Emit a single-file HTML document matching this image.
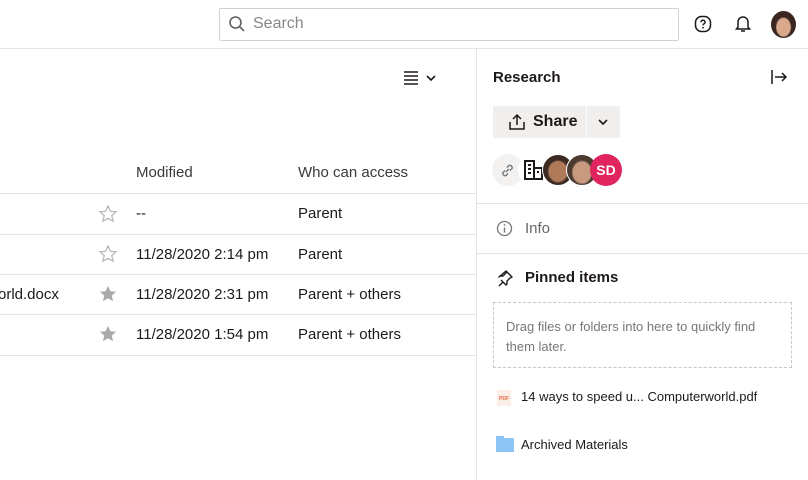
<!DOCTYPE html>
<html><head><style>
*{margin:0;padding:0;box-sizing:border-box}
body{width:808px;height:480px;overflow:hidden;background:#fff;font-family:"Liberation Sans",sans-serif;color:#1e1919;position:relative}
.a{position:absolute}
.hl{position:absolute;height:1px;background:#e6e3e0}
.t{position:absolute;font-size:15px;white-space:nowrap}
</style></head><body>
<div class="a" style="left:219px;top:8px;width:460px;height:33px;border:1px solid #d4d1ce;border-radius:2px"></div>
<svg class="a" style="left:228px;top:15px" width="18" height="18" viewBox="0 0 18 18"><circle cx="7.5" cy="7.5" r="5.5" fill="none" stroke="#636060" stroke-width="1.6"/><path d="M11.5 11.5L16 16" stroke="#636060" stroke-width="1.6"/></svg>
<div class="t" style="left:253px;top:15px;color:#8a8684;font-size:16px">Search</div>
<svg class="a" style="left:694px;top:15px" width="18" height="18" viewBox="0 0 18 18"><rect x="1.5" y="1.5" width="15" height="15" rx="6" fill="none" stroke="#1e1919" stroke-width="1.5"/><path d="M7 7.2a2 2 0 1 1 2.8 1.8c-.6.3-.8.7-.8 1.4" fill="none" stroke="#1e1919" stroke-width="1.4"/><circle cx="9" cy="12.7" r=".9" fill="#1e1919"/></svg>
<svg class="a" style="left:734px;top:14px" width="18" height="20" viewBox="0 0 18 20"><path d="M4 13V8a5 5 0 0 1 10 0v5l1.5 2h-13z" fill="none" stroke="#1e1919" stroke-width="1.5"/><path d="M7 17h4" stroke="#1e1919" stroke-width="1.5"/></svg>
<div class="a" style="left:771px;top:11px;width:25px;height:27px;border-radius:50%;background:radial-gradient(ellipse at 50% 60%,#d9a98e 0 38%,#3a2520 45%)"></div>
<div class="hl" style="left:0;top:48px;width:808px"></div>
<div class="a" style="left:476px;top:48px;width:1px;height:432px;background:#e6e3e0"></div>
<svg class="a" style="left:403px;top:70px" width="36" height="16" viewBox="0 0 36 16"><path d="M1 2h14M1 6h14M1 10h14M1 14h14" stroke="#1e1919" stroke-width="1.6"/><path d="M24 6l4 4 4-4" fill="none" stroke="#1e1919" stroke-width="1.6"/></svg>
<div class="t" style="left:136px;top:164px;color:#3b3838">Modified</div>
<div class="t" style="left:298px;top:164px;color:#3b3838">Who can access</div>
<div class="hl" style="left:0;top:193px;width:476px"></div>
<div class="hl" style="left:0;top:234px;width:476px"></div>
<div class="hl" style="left:0;top:274px;width:476px"></div>
<div class="hl" style="left:0;top:314px;width:476px"></div>
<div class="hl" style="left:0;top:355px;width:476px"></div>
<svg class="a" style="left:99px;top:205px" width="18" height="17" viewBox="0 0 18 17"><path d="M9 1l2.4 5.2 5.6.6-4.2 3.8 1.2 5.5L9 13.3 4 16.1l1.2-5.5L1 6.8l5.6-.6z" fill="none" stroke="#b5b2b0" stroke-width="1.2"/></svg>
<svg class="a" style="left:99px;top:245px" width="18" height="17" viewBox="0 0 18 17"><path d="M9 1l2.4 5.2 5.6.6-4.2 3.8 1.2 5.5L9 13.3 4 16.1l1.2-5.5L1 6.8l5.6-.6z" fill="none" stroke="#b5b2b0" stroke-width="1.2"/></svg>
<svg class="a" style="left:99px;top:285px" width="18" height="17" viewBox="0 0 18 17"><path d="M9 1l2.4 5.2 5.6.6-4.2 3.8 1.2 5.5L9 13.3 4 16.1l1.2-5.5L1 6.8l5.6-.6z" fill="#acaaa8"/></svg>
<svg class="a" style="left:99px;top:325px" width="18" height="17" viewBox="0 0 18 17"><path d="M9 1l2.4 5.2 5.6.6-4.2 3.8 1.2 5.5L9 13.3 4 16.1l1.2-5.5L1 6.8l5.6-.6z" fill="#acaaa8"/></svg>
<div class="t" style="left:136px;top:205px">--</div>
<div class="t" style="left:136px;top:246px">11/28/2020 2:14 pm</div>
<div class="t" style="left:136px;top:286px">11/28/2020 2:31 pm</div>
<div class="t" style="left:136px;top:326px">11/28/2020 1:54 pm</div>
<div class="t" style="left:298px;top:205px">Parent</div>
<div class="t" style="left:298px;top:246px">Parent</div>
<div class="t" style="left:298px;top:286px">Parent + others</div>
<div class="t" style="left:298px;top:326px">Parent + others</div>
<div class="t" style="left:-2px;top:286px">orld.docx</div>
<div class="t" style="left:493px;top:69px;font-weight:bold">Research</div>
<svg class="a" style="left:770px;top:68px" width="18" height="18" viewBox="0 0 18 18"><path d="M2 2v14M5 9h11M12 5l4 4-4 4" fill="none" stroke="#1e1919" stroke-width="1.5"/></svg>
<div class="a" style="left:493px;top:106px;width:93px;height:32px;background:#f0efed"></div>
<div class="a" style="left:587px;top:106px;width:33px;height:32px;background:#f0efed"></div>
<svg class="a" style="left:508px;top:113px" width="18" height="18" viewBox="0 0 18 18"><path d="M9 12V2M5 6l4-4 4 4M2 9v7h14V9" fill="none" stroke="#1e1919" stroke-width="1.5"/></svg>
<div class="t" style="left:533px;top:113px;font-weight:bold;font-size:16px">Share</div>
<svg class="a" style="left:597px;top:117px" width="12" height="10"><path d="M2 3l4 4 4-4" fill="none" stroke="#1e1919" stroke-width="1.6"/></svg>
<div class="a" style="left:492px;top:154px;width:32px;height:32px;border-radius:50%;background:#f3f2f0"></div>
<svg class="a" style="left:499px;top:162px" width="17" height="17" viewBox="0 0 17 17"><path d="M7 10l3-3M6 8.5L4 10.5a2.3 2.3 0 0 0 3 3L9 11.5M8 5.5l2-2a2.3 2.3 0 0 1 3 3L11 8.5" fill="none" stroke="#777" stroke-width="1.4"/></svg>
<div class="a" style="left:518px;top:154px;width:32px;height:32px;border-radius:50%;background:#fff"></div>
<svg class="a" style="left:523px;top:159px" width="22" height="22" viewBox="0 0 22 22"><path d="M2 20V2h9v18M11 9h8v11H1M5 6h3M5 10h3M5 14h3M14 13h2" fill="none" stroke="#1e1919" stroke-width="2"/></svg>
<div class="a" style="left:542px;top:154px;width:32px;height:32px;border-radius:50%;background:radial-gradient(ellipse at 50% 55%,#b07a5a 0 42%,#3a2a22 50%);border:1px solid #fff"></div>
<div class="a" style="left:566px;top:154px;width:32px;height:32px;border-radius:50%;background:radial-gradient(ellipse at 50% 58%,#c99a80 0 42%,#4a3a30 50%);border:1px solid #fff"></div>
<div class="a" style="left:590px;top:154px;width:32px;height:32px;border-radius:50%;background:#e0245e;color:#fff;font-weight:bold;font-size:14px;text-align:center;line-height:32px">SD</div>
<div class="hl" style="left:477px;top:203px;width:331px"></div>
<svg class="a" style="left:496px;top:220px" width="17" height="17" viewBox="0 0 17 17"><circle cx="8.5" cy="8.5" r="7" fill="none" stroke="#777" stroke-width="1.3"/><path d="M8.5 7.5v5" stroke="#777" stroke-width="1.4"/><circle cx="8.5" cy="5" r=".9" fill="#777"/></svg>
<div class="t" style="left:525px;top:220px;color:#6a6665">Info</div>
<div class="hl" style="left:477px;top:253px;width:331px"></div>
<svg class="a" style="left:496px;top:269px" width="18" height="18" viewBox="0 0 18 18"><path d="M10 2l6 6-2 1-3 3 0 3-1 1-3-3-4 4M7 13L5 11M3 8l1-1 3 0 3-3 0-2z" fill="none" stroke="#1e1919" stroke-width="1.4" stroke-linejoin="round"/></svg>
<div class="t" style="left:525px;top:269px;font-weight:bold">Pinned items</div>
<div class="a" style="left:493px;top:302px;width:299px;height:66px;border:1px dashed #c9c6c3"></div>
<div class="t" style="left:506px;top:317px;font-size:13px;color:#777;line-height:20px">Drag files or folders into here to quickly find<br>them later.</div>
<div class="a" style="left:497px;top:390px;width:14px;height:16px;background:#fbeee8"></div>
<div class="a" style="left:499px;top:396px;font-size:5px;color:#e86a3a;font-weight:bold">PDF</div>
<div class="t" style="left:521px;top:389px;font-size:13px">14 ways to speed u... Computerworld.pdf</div>
<div class="a" style="left:496px;top:438px;width:18px;height:14px;background:#8ec5f6;border-radius:1px"></div>
<div class="a" style="left:496px;top:436px;width:8px;height:4px;background:#8ec5f6"></div>
<div class="t" style="left:521px;top:437px;font-size:13px">Archived Materials</div>
</body></html>
